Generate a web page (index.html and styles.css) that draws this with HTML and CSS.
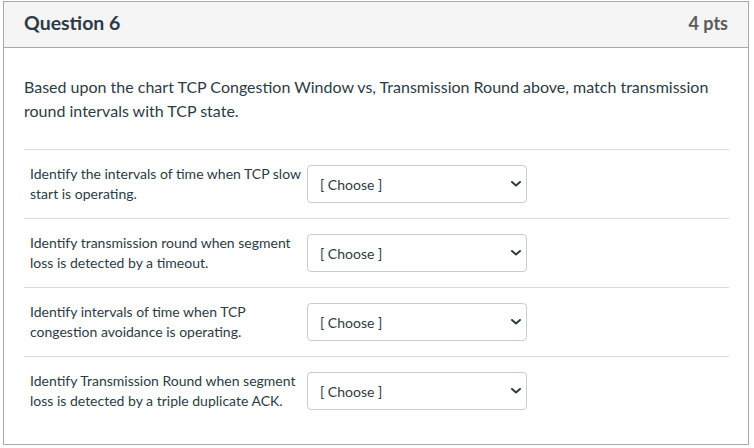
FILE: index.html
```html
<!DOCTYPE html>
<html lang="en">
<head>
<meta charset="utf-8">
<title>Question 6</title>
<link rel="stylesheet" href="styles.css">
</head>
<body>
<div class="question">
  <div class="q-header">
    <span class="q-title">Question 6</span>
    <span class="q-pts">4 pts</span>
  </div>
  <div class="q-body">
    <p class="q-text">Based upon the chart TCP Congestion Window vs, Transmission Round above, match transmission round intervals with TCP state.</p>
    <div class="answers">
      <div class="answer-row">
        <div class="answer-label">Identify the intervals of time when TCP slow start is operating.</div>
        <div class="select-wrap">
          <select class="choose"><option>[ Choose ]</option></select>
          <svg class="chevron" width="10" height="6" viewBox="0 0 10 6"><path d="M1 1 L5 4.5 L9 1" fill="none" stroke="#2d3b45" stroke-width="2" stroke-linecap="round" stroke-linejoin="round"/></svg>
        </div>
      </div>
      <div class="answer-row">
        <div class="answer-label">Identify transmission round when segment loss is detected by a timeout.</div>
        <div class="select-wrap">
          <select class="choose"><option>[ Choose ]</option></select>
          <svg class="chevron" width="10" height="6" viewBox="0 0 10 6"><path d="M1 1 L5 4.5 L9 1" fill="none" stroke="#2d3b45" stroke-width="2" stroke-linecap="round" stroke-linejoin="round"/></svg>
        </div>
      </div>
      <div class="answer-row">
        <div class="answer-label">Identify intervals of time when TCP congestion avoidance is operating.</div>
        <div class="select-wrap">
          <select class="choose"><option>[ Choose ]</option></select>
          <svg class="chevron" width="10" height="6" viewBox="0 0 10 6"><path d="M1 1 L5 4.5 L9 1" fill="none" stroke="#2d3b45" stroke-width="2" stroke-linecap="round" stroke-linejoin="round"/></svg>
        </div>
      </div>
      <div class="answer-row">
        <div class="answer-label">Identify Transmission Round when segment loss is detected by a triple duplicate ACK.</div>
        <div class="select-wrap">
          <select class="choose"><option>[ Choose ]</option></select>
          <svg class="chevron" width="10" height="6" viewBox="0 0 10 6"><path d="M1 1 L5 4.5 L9 1" fill="none" stroke="#2d3b45" stroke-width="2" stroke-linecap="round" stroke-linejoin="round"/></svg>
        </div>
      </div>
    </div>
  </div>
</div>
</body>
</html>
```

FILE: styles.css
```css
* { box-sizing: border-box; }
html, body { background: #ffffff; }
body {
  margin: 0;
  font-family: Lato, "Open Sans", "Liberation Sans", sans-serif;
  color: #2d3b45;
}
.question {
  margin: 1px 0 0 3px;
  width: 746px;
  height: 444px;
  border: 1px solid #a8a8a8;
  display: flex;
  flex-direction: column;
}
.q-header {
  height: 46px;
  background: #f5f5f5;
  border-bottom: 1px solid #a8a8a8;
  display: flex;
  align-items: baseline;
  justify-content: space-between;
  padding: 9px 20px 0 20px;
}
.q-title {
  font-size: 19.5px;
  font-weight: 700;
  line-height: 24px;
}
.q-pts {
  font-size: 18px;
  font-weight: 700;
  color: #5b5b5b;
}
.q-body {
  padding: 27px 19px 0 20px;
}
.q-text {
  margin: 0 0 26px;
  font-size: 16px;
  line-height: 24px;
}
.answer-row {
  border-top: 1px solid #dadada;
  display: flex;
  align-items: center;
  padding: 14px 0 14px 6px;
}
.answer-label {
  width: 277px;
  font-size: 14px;
  line-height: 20px;
}
.select-wrap {
  position: relative;
  width: 220px;
  height: 38px;
}
.choose {
  appearance: none;
  -webkit-appearance: none;
  width: 100%;
  height: 100%;
  border: 1px solid #c7cdd1;
  border-radius: 4px;
  background: #ffffff;
  font-family: Lato, "Open Sans", "Liberation Sans", sans-serif;
  font-size: 14px;
  color: #2d3b45;
  padding: 0 24px 0 12px;
  margin: 0;
}
.chevron {
  position: absolute;
  right: 6px;
  top: 16px;
}
```
